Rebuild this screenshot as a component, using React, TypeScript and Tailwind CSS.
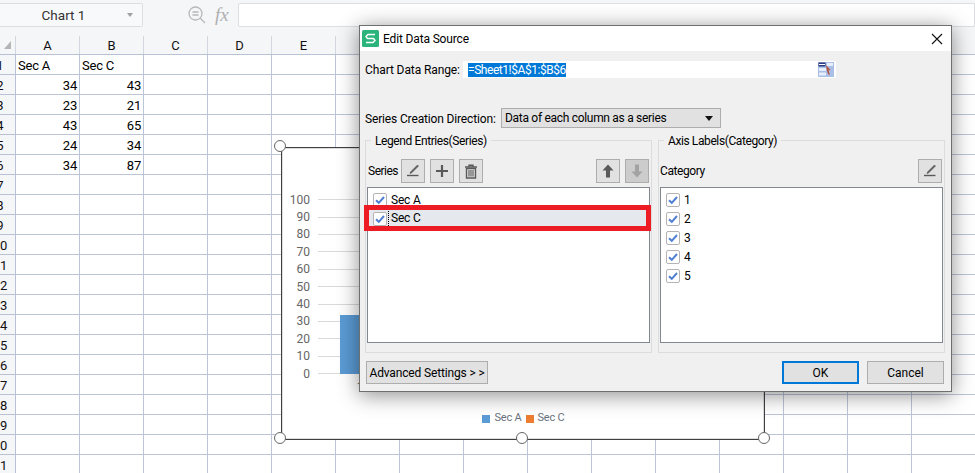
const columns = ["A", "B", "C", "D", "E", "F", "G", "H", "I", "J", "K", "L", "M", "N", "O"];
const rowNumbers = Array.from({ length: 21 }, (_, i) => i + 1);
const ticks = [100, 90, 80, 70, 60, 50, 40, 30, 20, 10, 0];

const cells: Record<number, string[]> = {
  1: ["Sec A", "Sec C"],
  2: ["34", "43"],
  3: ["23", "21"],
  4: ["43", "65"],
  5: ["24", "34"],
  6: ["34", "87"],
};

const secA = [34, 23, 43, 24, 34];
const secC = [43, 21, 65, 34, 87];

const ToolButton = ({ children, disabled }: { children: React.ReactNode; disabled?: boolean }) => (
  <button
    className={`flex h-[24px] w-[24px] items-center justify-center border border-[#adadad] ${
      disabled ? "bg-[#cccccc]" : "bg-[#e1e1e1]"
    }`}
  >
    {children}
  </button>
);

const PencilIcon = () => (
  <svg width="22" height="22" viewBox="0 0 22 22" fill="none">
    <path d="M15.5 5 L8.5 12 L8 13.5 L9.5 13 L16.5 6 Z" fill="#595959" stroke="#595959" strokeWidth="0.6" />
    <path d="M5 15.5 H16.5" stroke="#595959" strokeWidth="1.4" />
  </svg>
);

const Check = () => (
  <span className="flex h-[14px] w-[14px] shrink-0 items-center justify-center rounded-[2px] border border-[#b4b4b4] bg-white">
    <svg width="12" height="12" viewBox="0 0 12 12" fill="none">
      <path d="M2 6.2 L4.8 8.8 L10 3" stroke="#4f7fd1" strokeWidth="2" />
    </svg>
  </span>
);

const Handle = ({ className }: { className: string }) => (
  <span className={`absolute h-[12px] w-[12px] rounded-full border-[1.5px] border-[#666666] bg-white ${className}`} />
);

const Sheet = () => (
  <div className="flex flex-col text-[13px]">
    <div className="flex h-[19px] border-b border-[#b9c1d6] bg-[#f5f6f8] text-[#111111]">
      <div className="relative h-full w-[16px] shrink-0 border-r border-[#d3d7e0]">
        <svg className="absolute left-[4px] top-[5px]" width="7" height="8" viewBox="0 0 7 8">
          <path d="M7 0 V8 H0 Z" fill="#b5b5b5" />
        </svg>
      </div>
      {columns.map((c) => (
        <div key={c} className="flex w-[64px] shrink-0 items-center justify-center border-r border-[#d3d7e0] pt-px">
          {c}
        </div>
      ))}
    </div>
    {rowNumbers.map((r) => (
      <div key={r} className="flex h-[20px] shrink-0">
        <div className="h-full w-[16px] shrink-0 overflow-hidden border-r border-b border-[#b9c1d6] bg-[#f5f6f8]">
          <div className="-ml-[15px] w-[30px] text-center leading-[21px] text-[#111111]">{r}</div>
        </div>
        {columns.map((c, i) => {
          const value = cells[r]?.[i];
          return (
            <div
              key={c}
              className={`h-full w-[64px] shrink-0 border-r border-b border-[#bcc4d8] px-[2px] leading-[21px] tracking-[-0.2px] text-black ${
                r === 1 ? "text-left" : "text-right"
              }`}
            >
              {value}
            </div>
          );
        })}
      </div>
    ))}
  </div>
);

const Chart = () => (
  <div className="absolute left-[281px] top-[147px] h-[293px] w-[484px] border border-[#404040] bg-white pt-[43px] shadow-[inset_0_0_0_1px_#dddddd]">
    <div className="relative">
      {ticks.map((t) => (
        <div key={t} className="flex h-[17.4px] items-center">
          <span className="w-[28px] text-right text-[12px] text-[#666666]">{t}</span>
          <span className="ml-[8px] mr-[40px] h-px flex-1 bg-[#d9d9d9]" />
        </div>
      ))}
      <div className="absolute bottom-[8px] left-[35px] flex items-end">
        {secA.map((a, i) => (
          <div key={i} className="flex w-[86.4px] shrink-0 items-end justify-center">
            <div className="w-[20px] bg-[#5b9bd5]" style={{ height: a * 1.74 }} />
            <div className="w-[20px] bg-[#ed7d31]" style={{ height: secC[i] * 1.74 }} />
          </div>
        ))}
      </div>
    </div>
    <div className="-mt-[4px] ml-[35px] flex text-[12px] text-[#666666]">
      {secA.map((_, i) => (
        <span key={i} className="w-[86.4px] shrink-0 text-center">
          {i + 1}
        </span>
      ))}
    </div>
    <div className="mt-[14px] flex items-center justify-center gap-[4px] pl-[1px] text-[11px] tracking-[-0.2px] text-[#6b7280]">
      <span className="h-[8px] w-[8px] bg-[#5b9bd5]" />
      <span>Sec A</span>
      <span className="h-[8px] w-[8px] bg-[#ed7d31]" />
      <span>Sec C</span>
    </div>
    <Handle className="-left-[8px] -top-[8px]" />
    <Handle className="-bottom-[5px] -left-[8px]" />
    <Handle className="-bottom-[5px] left-[234px]" />
    <Handle className="-bottom-[5px] -right-[6px]" />
  </div>
);

const Dialog = () => (
  <div className="absolute left-[359px] top-[25px] flex h-[367px] w-[593px] flex-col whitespace-nowrap border border-[#6f6f6f] bg-[#f0f0f0] text-[12px] text-black shadow-[0_3px_20px_rgba(0,0,0,0.45)]">
    <div className="flex h-[25px] shrink-0 items-center bg-white pl-[2px] pr-[8px]">
      <svg width="17" height="17" viewBox="0 0 17 17">
        <rect width="17" height="17" rx="1.5" fill="#2bb37c" />
        <path d="M13 4.5 H6 L4 6.5 L5.5 8.5 H11.5 L13 10.5 L11 12.5 H4" fill="none" stroke="#ffffff" strokeWidth="1.4" />
      </svg>
      <span className="ml-[4px] text-[12px] tracking-[-0.15px]">Edit Data Source</span>
      <svg className="ml-auto" width="12" height="12" viewBox="0 0 12 12">
        <path d="M1 1 L11 11 M11 1 L1 11" stroke="#111111" strokeWidth="1.1" />
      </svg>
    </div>

    <div className="mt-[10px] flex h-[17px] shrink-0 items-center pl-[5px]">
      <span className="w-[98px] shrink-0 pt-px tracking-[-0.1px]">Chart Data Range:</span>
      <div className="flex h-full w-[373px] items-center bg-white pl-[5px] pr-[2px]">
        <span className="h-[14px] bg-[#0078d7] leading-[14px] tracking-[-0.45px] text-white">=Sheet1!$A$1:$B$6</span>
        <svg className="ml-auto" width="16" height="15" viewBox="0 0 16 15">
          <rect width="16" height="15" fill="#a9bfe8" />
          <rect x="0.5" y="0.5" width="7" height="4" fill="#2b3a80" />
          <rect x="1" y="2" width="6" height="1" fill="#ffffff" />
          <rect x="1" y="6" width="7" height="3" fill="#e6edfb" />
          <rect x="1" y="10.5" width="7" height="3" fill="#e6edfb" />
          <rect x="9" y="1" width="6" height="3" fill="#e6edfb" />
          <path d="M8 3 L12.5 8 L10.5 8.5 L12 13 L10 12 L9 9 Z" fill="#b5533c" />
        </svg>
      </div>
    </div>

    <div className="mt-[30px] flex h-[20px] shrink-0 items-center pl-[5px]">
      <span className="w-[136px] shrink-0 pt-px tracking-[-0.15px]">Series Creation Direction:</span>
      <div className="flex h-full w-[220px] items-center border border-[#adadad] bg-[#e1e1e1] pl-[3px] pr-[7px]">
        <span className="tracking-[-0.3px]">Data of each column as a series</span>
        <svg className="ml-auto" width="8" height="5" viewBox="0 0 8 5">
          <path d="M0 0 H8 L4 5 Z" fill="#111111" />
        </svg>
      </div>
    </div>

    <div className="mt-[4px] flex shrink-0 gap-[6px] pl-[5px]">
      <fieldset className="h-[221px] w-[287px] border border-[#dcdcdc] px-px">
        <legend className="ml-[4px] h-[17px] px-[4px] pt-px leading-[17px] tracking-[-0.4px]">Legend Entries(Series)</legend>
        <div className="mt-[10px] flex h-[24px] items-center pl-[1px] pr-[1px]">
          <span className="w-[33px] tracking-[-0.5px]">Series</span>
          <div className="flex gap-[5px]">
            <ToolButton>
              <PencilIcon />
            </ToolButton>
            <ToolButton>
              <svg width="14" height="14" viewBox="0 0 14 14">
                <path d="M7 1 V13 M1 7 H13" stroke="#595959" strokeWidth="2.2" />
              </svg>
            </ToolButton>
            <ToolButton>
              <svg width="14" height="15" viewBox="0 0 14 15" fill="none">
                <path d="M1 3 H13 M5 3 V1.2 H9 V3" stroke="#595959" strokeWidth="1.4" />
                <path d="M2.5 4.5 H11.5 V14 H2.5 Z" stroke="#595959" strokeWidth="1.4" />
                <path d="M5 6 V12.5 M7 6 V12.5 M9 6 V12.5" stroke="#595959" strokeWidth="1.1" />
              </svg>
            </ToolButton>
          </div>
          <div className="ml-auto flex gap-[5px]">
            <ToolButton>
              <svg width="12" height="14" viewBox="0 0 12 14">
                <path d="M6 0.5 L11.5 6.5 H8 V13.5 H4 V6.5 H0.5 Z" fill="#595959" />
              </svg>
            </ToolButton>
            <ToolButton disabled>
              <svg width="12" height="14" viewBox="0 0 12 14">
                <path d="M6 13.5 L11.5 7.5 H8 V0.5 H4 V7.5 H0.5 Z" fill="#a3a3a3" />
              </svg>
            </ToolButton>
          </div>
        </div>
        <div className="mt-[4px] h-[156px] border border-[#828790] bg-white pt-[2px]">
          <div className="flex h-[19px] items-center gap-[4px] pl-[5px]">
            <Check />
            <span className="tracking-[-0.2px]">Sec A</span>
          </div>
          <div className="relative flex h-[19px] items-center bg-[#e5e8ec] pl-[5px]">
            <Check />
            <span className="ml-[1px] border-l border-dotted border-black pl-[2px] leading-[19px] tracking-[-0.2px]">Sec C</span>
            <div className="absolute -bottom-[3px] -left-[4px] -right-[2px] -top-[4px] border-[5px] border-[#ed1c24]" />
          </div>
        </div>
      </fieldset>

      <fieldset className="h-[221px] w-[287px] border border-[#dcdcdc] px-px">
        <legend className="ml-[4px] h-[17px] px-[4px] pt-px leading-[17px] tracking-[-0.4px]">Axis Labels(Category)</legend>
        <div className="mt-[10px] flex h-[24px] items-center pr-px">
          <span className="tracking-[-0.4px]">Category</span>
          <div className="ml-auto">
            <ToolButton>
              <PencilIcon />
            </ToolButton>
          </div>
        </div>
        <div className="mt-[4px] h-[156px] border border-[#828790] bg-white pl-[5px] pt-[2px]">
          {[1, 2, 3, 4, 5].map((n) => (
            <div key={n} className="flex h-[19px] items-center gap-[4px]">
              <Check />
              <span>{n}</span>
            </div>
          ))}
        </div>
      </fieldset>
    </div>

    <div className="mt-[8px] flex h-[23px] shrink-0 pl-[6px] pr-[7px]">
      <button className="w-[122px] border border-[#adadad] bg-[#e1e1e1] pt-px tracking-[-0.15px]">Advanced Settings &gt; &gt;</button>
      <button className="ml-auto w-[77px] border-2 border-[#0078d7] bg-[#e1e1e1] pt-px">OK</button>
      <button className="ml-[8px] w-[77px] border border-[#adadad] bg-[#e1e1e1] pt-px">Cancel</button>
    </div>
  </div>
);

export default function App() {
  return (
    <div className="relative h-[473px] w-[975px] overflow-hidden bg-white font-['Roboto',sans-serif] text-[12px]">
      <div className="flex h-[36px] items-center bg-[#f5f6f8] pb-[6px]">
        <div className="flex h-[24px] w-[143px] items-center rounded-r-[2px] border border-l-0 border-[#dcdee2] bg-[#f8f9fa] pr-[9px]">
          <span className="flex-1 pt-px text-center text-[13.5px] text-[#333333]">Chart 1</span>
          <svg width="6" height="4" viewBox="0 0 6 4">
            <path d="M0 0 H6 L3 4 Z" fill="#a0a0a0" />
          </svg>
        </div>
        <svg className="ml-[45px]" width="18" height="18" viewBox="0 0 18 18" fill="none">
          <circle cx="7.5" cy="7.5" r="6.5" stroke="#b8b8b8" strokeWidth="1.3" />
          <path d="M4.5 6 H10.5 M4.5 9 H10.5 M12 12 L17 17" stroke="#b8b8b8" strokeWidth="1.3" />
        </svg>
        <span className="ml-[9px] font-['Liberation_Serif',serif] text-[19px] italic text-[#b0b0b0]">fx</span>
        <div className="ml-[9px] h-[24px] flex-1 rounded-l-[2px] border border-[#dcdee2] bg-white" />
      </div>
      <Sheet />
      <Chart />
      <Dialog />
    </div>
  );
}
